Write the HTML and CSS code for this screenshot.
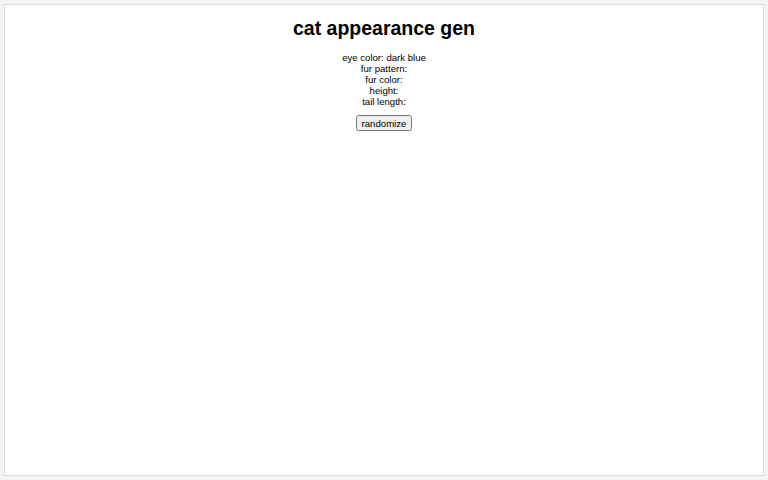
FILE: index.html
```html
<!DOCTYPE html>
<html>
<head>
<meta charset="utf-8">
<title>cat appearance gen</title>
<link rel="stylesheet" href="styles.css">
</head>
<body>
<div class="frame">
  <h1 class="title">cat appearance gen</h1>
  <div class="traits">
    <div>eye color: dark blue</div>
    <div>fur pattern: </div>
    <div>fur color: </div>
    <div>height: </div>
    <div>tail length: </div>
  </div>
  <button class="roll">randomize</button>
</div>
</body>
</html>
```
FILE: styles.css
```css
html, body {
  margin: 0;
  height: 100%;
}
body {
  background: #f4f4f4;
  padding: 4px;
  box-sizing: border-box;
  font-family: "Liberation Sans", Arial, sans-serif;
}
.frame {
  height: 100%;
  box-sizing: border-box;
  background: #fff;
  border: 1px solid #dcdcdc;
  display: flex;
  flex-direction: column;
  align-items: center;
  text-align: center;
}
.title {
  margin: 12px 0 0;
  font-size: 19.5px;
  line-height: 22px;
  font-weight: bold;
  color: #000;
}
.traits {
  margin-top: 13px;
  font-size: 9.6px;
  line-height: 11px;
  color: #000;
}
.roll {
  margin-top: 8px;
  font-family: "Liberation Sans", Arial, sans-serif;
  font-size: 9.6px;
  line-height: 11px;
  padding: 1px 4px 0;
}
```
